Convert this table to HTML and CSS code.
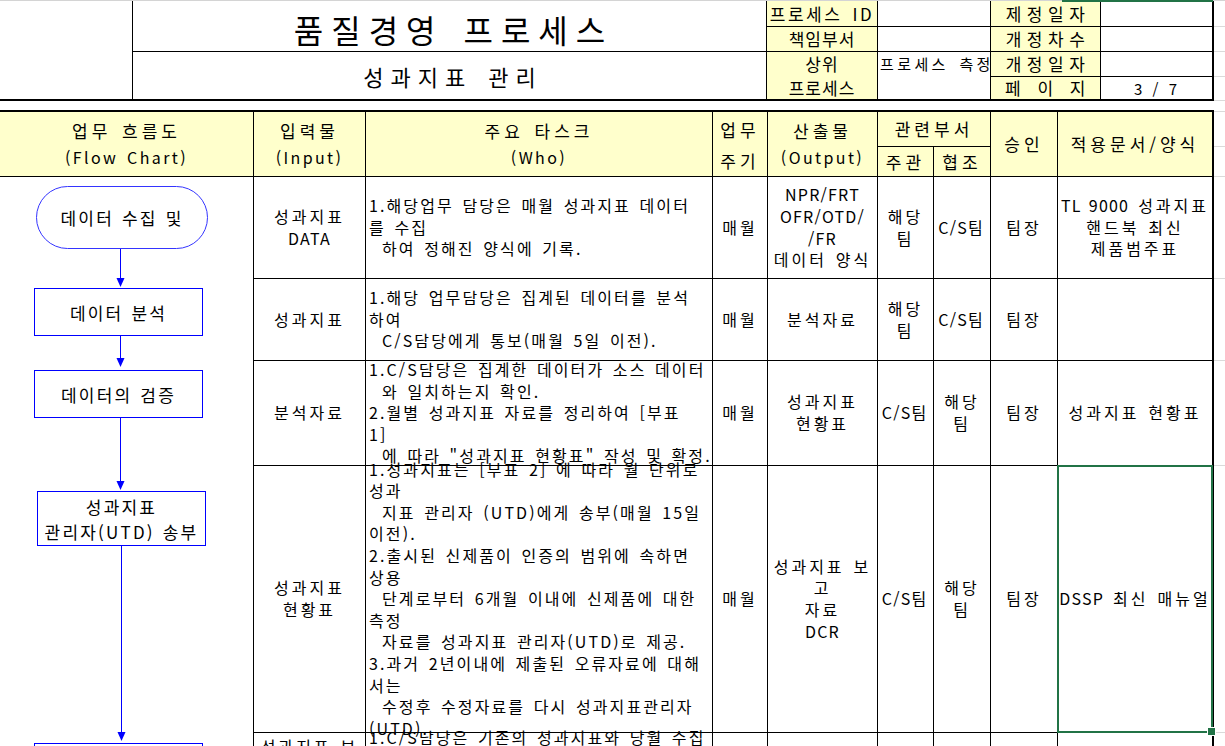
FILE: index.html
```html
<!DOCTYPE html>
<html lang="ko">
<head>
<meta charset="utf-8">
<title>품질경영 프로세스 - 성과지표 관리</title>
<link rel="stylesheet" href="styles.css">
</head>
<body>
<div class="topline"><i class="tl-gray"></i><i class="tl-green"></i><i class="tl-rest"></i></div>

<div class="doc-head">
  <div class="hc h-blank"></div>
  <div class="hc h-title">품질경영 프로세스</div>
  <div class="hc h-lab h-id">프로세스 ID</div>
  <div class="hc h-val"></div>
  <div class="hc h-lab h-wide">제정일자</div>
  <div class="hc h-val h-end"></div>
  <div class="gut"></div>

  <div class="hc h-lab">책임부서</div>
  <div class="hc h-val"></div>
  <div class="hc h-lab h-wide">개정차수</div>
  <div class="hc h-val h-end"></div>
  <div class="gut"></div>

  <div class="hc h-sub">성과지표 관리</div>
  <div class="hc h-lab h-tall">상위<br>프로세스</div>
  <div class="hc h-val h-tall h-top">프로세스 측정</div>
  <div class="hc h-lab h-wide">개정일자</div>
  <div class="hc h-val h-end"></div>
  <div class="gut"></div>

  <div class="hc h-lab h-last h-pg">페 이 지</div>
  <div class="hc h-val h-end h-last h-page">3 / 7</div>
  <div class="gut"></div>
</div>

<div class="spacer"></div>

<div class="grid">
  <div class="rule"></div><div class="gut"></div>

  <div class="cell th r2"><div>업무 흐름도<br><span class="lat">(Flow Chart)</span></div></div>
  <div class="cell th r2"><div>입력물<br><span class="lat">(Input)</span></div></div>
  <div class="cell th r2"><div>주요 타스크<br><span class="lat">(Who)</span></div></div>
  <div class="cell th r2 th-cycle"><div>업무<br>주기</div></div>
  <div class="cell th r2"><div>산출물<br><span class="lat">(Output)</span></div></div>
  <div class="cell th c2">관련부서</div>
  <div class="cell th r2">승인</div>
  <div class="cell th r2 end">적용문서/양식</div>
  <div class="gut"></div>
  <div class="cell th">주관</div>
  <div class="cell th">협조</div>
  <div class="gut"></div>

  <!-- flow chart column -->
  <div class="cell flow">
    <svg class="arrows" viewBox="0 0 254 640" width="254" height="640">
      <g stroke="#0000ff" stroke-width="1" fill="none">
        <path d="M120.5 72V102"/>
        <path d="M120.5 159V182"/>
        <path d="M120.5 241V305"/>
        <path d="M121.5 369V556"/>
      </g>
      <g fill="#0000ff">
        <path d="M116.5 101H124.5L120.5 110Z"/>
        <path d="M116.5 181H124.5L120.5 190Z"/>
        <path d="M116.5 304H124.5L120.5 313Z"/>
        <path d="M117.5 555H125.5L121.5 564Z"/>
      </g>
    </svg>
    <div class="node n-term">데이터 수집 및</div>
    <div class="node n1">데이터 분석</div>
    <div class="node n2">데이터의 검증</div>
    <div class="node n3"><div>성과지표<br>관리자(UTD) 송부</div></div>
    <div class="node n4"></div>
  </div>

  <!-- row 1 -->
  <div class="cell"><div>성과지표<br><span class="lat">DATA</span></div></div>
  <div class="cell task"><div class="lines">
    <div>1.해당업무 담당은 매월 성과지표 데이터</div>
    <div>를 수집</div>
    <div class="ind">하여 정해진 양식에 기록.</div>
  </div></div>
  <div class="cell">매월</div>
  <div class="cell"><div><span class="lat">NPR/FRT<br>OFR/OTD/<br>/FR</span><br>데이터 양식</div></div>
  <div class="cell"><div>해당<br>팀</div></div>
  <div class="cell"><div><span class="lat">C/S</span>팀</div></div>
  <div class="cell">팀장</div>
  <div class="cell end"><div><span class="lat">TL 9000</span> 성과지표<br>핸드북 최신<br>제품범주표</div></div>
  <div class="gut"></div>

  <!-- row 2 -->
  <div class="cell">성과지표</div>
  <div class="cell task"><div class="lines">
    <div>1.해당 업무담당은 집계된 데이터를 분석</div>
    <div>하여</div>
    <div class="ind">C/S담당에게 통보(매월 5일 이전).</div>
  </div></div>
  <div class="cell">매월</div>
  <div class="cell">분석자료</div>
  <div class="cell"><div>해당<br>팀</div></div>
  <div class="cell"><div><span class="lat">C/S</span>팀</div></div>
  <div class="cell">팀장</div>
  <div class="cell end"></div>
  <div class="gut"></div>

  <!-- row 3 -->
  <div class="cell">분석자료</div>
  <div class="cell task"><div class="lines">
    <div>1.C/S담당은 집계한 데이터가 소스 데이터</div>
    <div class="ind">와 일치하는지 확인.</div>
    <div>2.월별 성과지표 자료를 정리하여 [부표</div>
    <div>1]</div>
    <div class="ind">에 따라 "성과지표 현황표" 작성 및 확정.</div>
  </div></div>
  <div class="cell">매월</div>
  <div class="cell"><div>성과지표<br>현황표</div></div>
  <div class="cell"><div><span class="lat">C/S</span>팀</div></div>
  <div class="cell"><div>해당<br>팀</div></div>
  <div class="cell">팀장</div>
  <div class="cell end">성과지표 현황표</div>
  <div class="gut"></div>

  <!-- row 4 -->
  <div class="cell"><div>성과지표<br>현황표</div></div>
  <div class="cell task"><div class="lines">
    <div>1.성과지표는 [부표 2] 에 따라 월 단위로</div>
    <div>성과</div>
    <div class="ind">지표 관리자 (UTD)에게 송부(매월 15일</div>
    <div>이전).</div>
    <div>2.출시된 신제품이 인증의 범위에 속하면</div>
    <div>상용</div>
    <div class="ind">단계로부터 6개월 이내에 신제품에 대한</div>
    <div>측정</div>
    <div class="ind">자료를 성과지표 관리자(UTD)로 제공.</div>
    <div>3.과거 2년이내에 제출된 오류자료에 대해</div>
    <div>서는</div>
    <div class="ind">수정후 수정자료를 다시 성과지표관리자</div>
    <div>(UTD).</div>
  </div></div>
  <div class="cell">매월</div>
  <div class="cell"><div>성과지표 보<br>고<br>자료<br><span class="lat">DCR</span></div></div>
  <div class="cell"><div><span class="lat">C/S</span>팀</div></div>
  <div class="cell"><div>해당<br>팀</div></div>
  <div class="cell">팀장</div>
  <div class="cell end sel"><div><span class="lat">DSSP</span> 최신 매뉴얼</div></div>
  <div class="gut"></div>

  <!-- row 5 (cut off by the window) -->
  <div class="cell top"><div class="cut-in">성과지표 보</div></div>
  <div class="cell task top"><div class="lines cut-task">
    <div>1.C/S담당은 기존의 성과지표와 당월 수집</div>
  </div></div>
  <div class="cell"></div>
  <div class="cell"></div>
  <div class="cell"></div>
  <div class="cell"></div>
  <div class="cell"></div>
  <div class="cell end"></div>
  <div class="gut"></div>
</div>
</body>
</html>
```

FILE: styles.css
```css
* { box-sizing: border-box; }

html, body {
  margin: 0;
  padding: 0;
}

body {
  width: 1225px;
  height: 746px;
  overflow: hidden;
  background: #ffffff;
  color: #000000;
  font-family: "Noto Sans CJK KR", "Noto Sans", sans-serif;
}

/* spreadsheet gridline strip at the very top */
.topline {
  display: flex;
  align-items: flex-start;
  height: 1px;
}
.topline i { display: block; height: 1px; }
.tl-gray { width: 1062px; background: #d4d4d4; }
.topline .tl-green { width: 151px; height: 2px; background: #217346; position: relative; z-index: 2; }
.tl-rest { flex: 1; background: #d4d4d4; }

/* ---------- document header ---------- */
.doc-head {
  display: grid;
  grid-template-columns: 133px 634px 111px 113px 110px 113px 11px;
  grid-template-rows: 26px 25px 25px 24px;
}

.hc {
  border-right: 1px solid #000;
  border-bottom: 1px solid #000;
  display: flex;
  align-items: center;
  justify-content: center;
  text-align: center;
  white-space: nowrap;
}

.h-blank {
  grid-row: span 4;
  border-bottom: 2px solid #000;
}

.h-title {
  grid-row: span 2;
  font-size: 32px;
  letter-spacing: 8px;
  word-spacing: 3px;
  padding-top: 5px;
  padding-left: 8px;
}

.h-sub {
  grid-row: span 2;
  font-size: 22px;
  letter-spacing: 7px;
  word-spacing: 3px;
  padding-left: 7px;
  border-bottom: 2px solid #000;
}

.h-lab {
  background: #ffffcc;
  font-size: 17px;
  letter-spacing: 1px;
  line-height: 24px;
}
.h-id { letter-spacing: 2.5px; word-spacing: 3px; }
.h-wide { letter-spacing: 5.5px; padding-left: 5px; }
.h-pg { letter-spacing: 4.5px; word-spacing: 3px; padding-left: 4px; }

.h-tall {
  grid-row: span 2;
  border-bottom: 2px solid #000;
}

.h-top {
  align-items: flex-start;
  justify-content: flex-start;
  font-size: 15px;
  letter-spacing: 3.4px;
  word-spacing: 3px;
  line-height: 24px;
  padding-left: 2px;
}

.h-end { border-right: 2px solid #000; }
.h-last { border-bottom: 2px solid #000; }

.h-page {
  font-size: 15px;
  letter-spacing: 2px;
  word-spacing: 2px;
}

.gut {
  border-bottom: 1px solid #dadada;
}

.spacer { height: 9px; }

/* ---------- main table ---------- */
.grid {
  display: grid;
  grid-template-columns: 254px 112px 347px 55px 110px 56px 57px 67px 156px 11px;
  grid-template-rows: 2px 35px 30px 102px 82px 105px 267px 120px;
}

.rule {
  grid-column: span 9;
  background: #000;
}

.cell {
  border-right: 1px solid #000;
  border-bottom: 1px solid #000;
  display: flex;
  align-items: center;
  justify-content: center;
  text-align: center;
  font-size: 16px;
  line-height: 21.6px;
  letter-spacing: 3px;
  word-spacing: 1.5px;
  white-space: nowrap;
  min-width: 0;
  min-height: 0;
}

.lat { letter-spacing: 1.2px; }

.th {
  background: #ffffcc;
  font-size: 17px;
  letter-spacing: 4px;
  word-spacing: 2px;
  line-height: 26px;
}
.th .lat { font-size: 16px; letter-spacing: 2.4px; }
.th-cycle { line-height: 31px; padding-top: 2px; }

.r2 { grid-row: span 2; }
.c2 { grid-column: span 2; }
.end { border-right: 2px solid #000; }

.task {
  justify-content: flex-start;
  text-align: left;
  padding-left: 3px;
  letter-spacing: 2.1px;
  word-spacing: 2px;
}
.lines > div { white-space: pre; }
.lines .ind { padding-left: 13px; }

.top { align-items: flex-start; }
.cut-in { margin-top: 3px; }
.cut-task { margin-top: -6px; }

/* selected cell (green Excel frame) */
.sel { position: relative; }
.sel::after {
  content: "";
  position: absolute;
  left: -1px;
  top: -1px;
  right: -1px;
  bottom: -1px;
  border: 2px solid #217346;
}
.sel::before {
  content: "";
  position: absolute;
  right: -4px;
  bottom: -4px;
  width: 7px;
  height: 7px;
  background: #217346;
  border: 1px solid #ffffff;
  z-index: 1;
}

/* ---------- flow chart ---------- */
.flow {
  grid-row: span 5;
  position: relative;
  border-bottom: none;
  display: block;
}

.arrows {
  position: absolute;
  left: 0;
  top: 0;
}

.node {
  position: absolute;
  border: 1px solid #0000ff;
  background: #ffffff;
  display: flex;
  align-items: center;
  justify-content: center;
  text-align: center;
  font-size: 17px;
  line-height: 25px;
  letter-spacing: 2.2px;
  word-spacing: 1px;
  white-space: nowrap;
}

.n-term {
  left: 36px;
  top: 9px;
  width: 172px;
  height: 63px;
  border-radius: 32px;
  border-color: #3434ff;
}
.n1 { left: 34px; top: 111px; width: 169px; height: 48px; }
.n2 { left: 34px; top: 193px; width: 169px; height: 48px; }
.n3 { left: 37px; top: 314px; width: 169px; height: 55px; }
.n4 { left: 34px; top: 566px; width: 169px; height: 60px; }
```
